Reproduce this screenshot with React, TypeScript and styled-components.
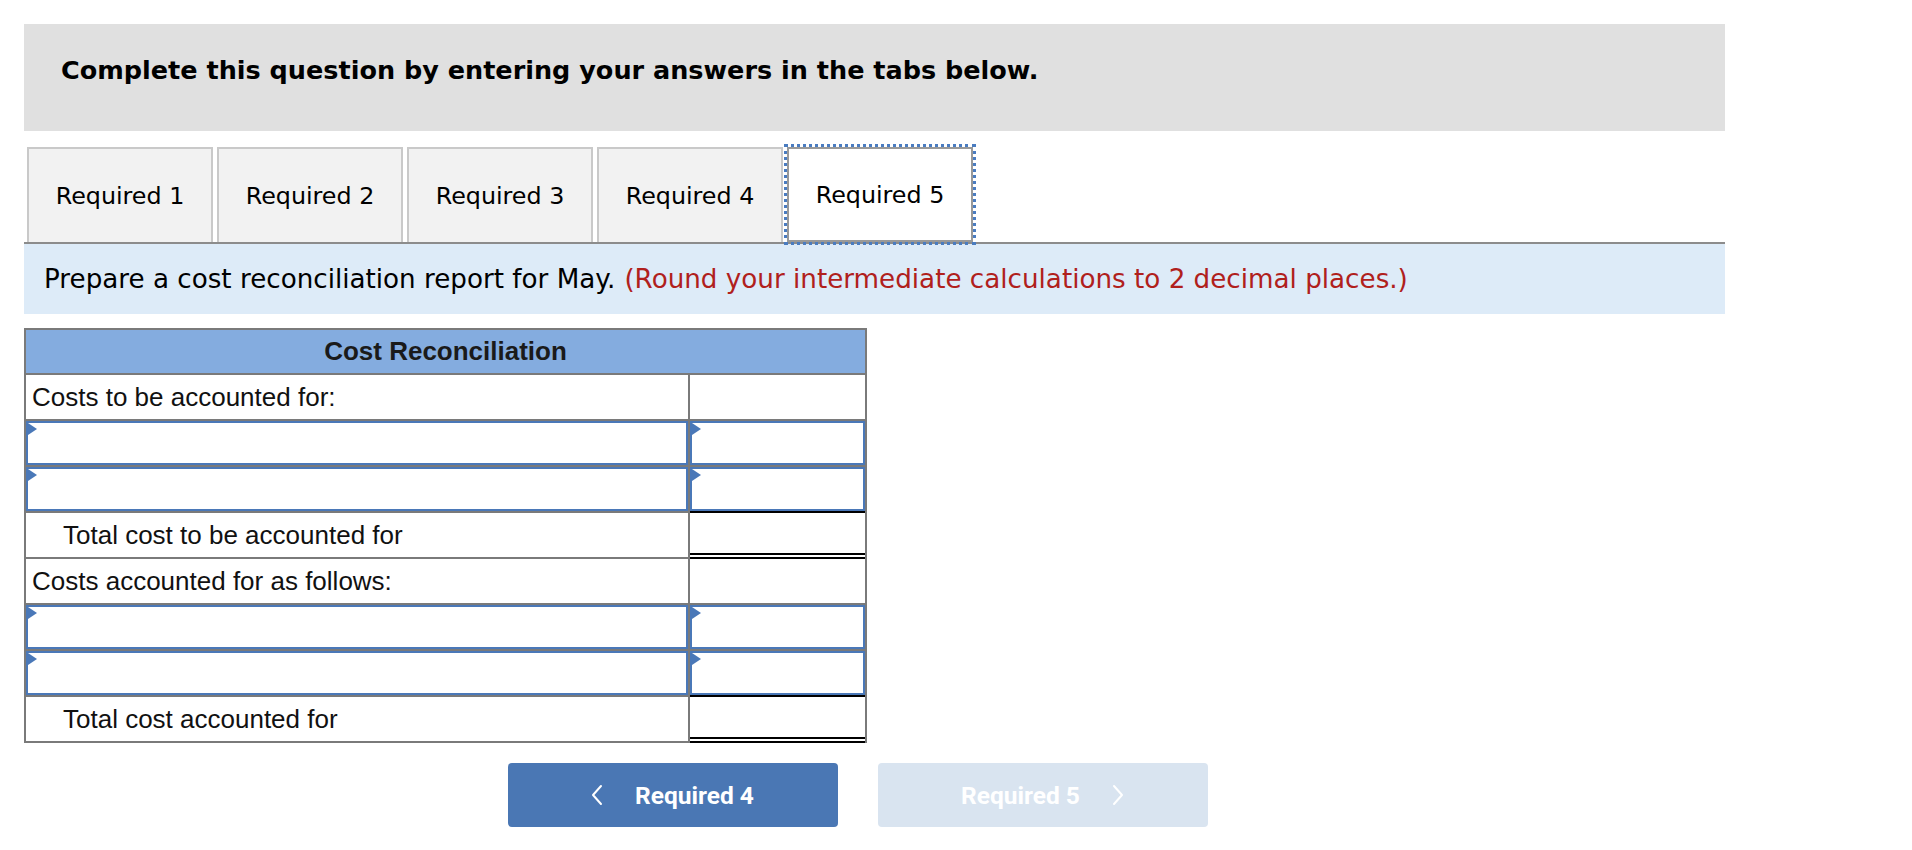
import React from 'react';
import styled, { createGlobalStyle } from 'styled-components';

const GlobalStyle = createGlobalStyle`
  body {
    margin: 0;
    background: #ffffff;
    font-family: "DejaVu Sans", Verdana, sans-serif;
  }
`;

const Page = styled.div`
  padding: 24px 0 0 24px;
  width: 1701px;
`;

const Banner = styled.div`
  background-color: #e0e0e0;
  height: 107px;
  padding: 22px 37px 0;
  box-sizing: border-box;
  font-family: "DejaVu Sans", Verdana, sans-serif;
  font-weight: bold;
  font-size: 25.5px;
  line-height: 48px;
  color: #000;
`;

const TabBar = styled.div`
  display: flex;
  gap: 4px;
  margin-top: 16px;
  padding-left: 3px;
  border-bottom: 2px solid #8c8c8c;
`;

const Tab = styled.button<{ $active?: boolean }>`
  width: 186px;
  height: 95px;
  box-sizing: border-box;
  margin: 0;
  padding: 0;
  font-family: "DejaVu Sans", Verdana, sans-serif;
  font-size: 23.8px;
  color: #000;
  cursor: pointer;
  background-color: ${(p) => (p.$active ? '#ffffff' : '#f2f2f2')};
  border: 2px solid ${(p) => (p.$active ? '#999999' : '#c9c9c9')};
  border-bottom: ${(p) => (p.$active ? '2px solid #999999' : 'none')};
  outline: ${(p) => (p.$active ? '3px dotted #4a7cc0' : 'none')};
  margin-bottom: ${(p) => (p.$active ? '-2px' : '0')};
  position: relative;
`;

const Instructions = styled.div`
  background-color: #ddebf8;
  height: 70px;
  padding-left: 20px;
  display: flex;
  align-items: center;
  font-family: "DejaVu Sans", Verdana, sans-serif;
  font-size: 26.2px;
  color: #000;
`;

const Hint = styled.span`
  color: #b0201c;
  margin-left: 9px;
`;

const Sheet = styled.div`
  margin-top: 14px;
  width: 843px;
  box-sizing: border-box;
  border: 2px solid #7a7a7a;
  border-bottom: none;
  font-family: "Liberation Sans", Arial, sans-serif;
  font-size: 26px;
  color: #111;
`;

const SheetTitle = styled.div`
  background-color: #84acdf;
  height: 45px;
  box-sizing: border-box;
  border-bottom: 2px solid #7a7a7a;
  display: flex;
  align-items: center;
  justify-content: center;
  font-weight: bold;
  color: #1a1a1a;
`;

const Row = styled.div`
  display: grid;
  grid-template-columns: 664px 1fr;
`;

const LabelCell = styled.div<{ $indent?: boolean }>`
  height: 46px;
  box-sizing: border-box;
  border-right: 2px solid #7a7a7a;
  border-bottom: 2px solid #7a7a7a;
  display: flex;
  align-items: center;
  padding-left: ${(p) => (p.$indent ? '37px' : '6px')};
`;

type Edge = 'gray' | 'black' | 'double';

const ValueCell = styled.div<{ $edge?: Edge; $left?: boolean }>`
  height: 46px;
  box-sizing: border-box;
  position: relative;
  border-right: ${(p) => (p.$left ? '2px solid #7a7a7a' : 'none')};
  border-bottom: ${(p) =>
    p.$edge === 'double'
      ? '6px double #000'
      : p.$edge === 'black'
      ? '2px solid #000'
      : '2px solid #7a7a7a'};

  &::before {
    content: '';
    position: absolute;
    top: 2px;
    left: 2px;
    width: 0;
    height: 0;
    border-top: 6px solid transparent;
    border-bottom: 6px solid transparent;
    border-left: 9px solid #4a78b8;
    pointer-events: none;
  }
`;

const PlainCell = styled.div<{ $edge?: Edge }>`
  height: 46px;
  box-sizing: border-box;
  border-bottom: ${(p) =>
    p.$edge === 'double' ? '6px double #000' : '2px solid #7a7a7a'};
`;

const Field = styled.input`
  display: block;
  width: 100%;
  height: 100%;
  box-sizing: border-box;
  margin: 0;
  border: 2px solid #4a78b8;
  outline: none;
  background: #fff;
  font-family: "Liberation Sans", Arial, sans-serif;
  font-size: 22px;
  padding: 0 10px;
`;

const Nav = styled.div`
  display: flex;
  justify-content: center;
  gap: 40px;
  margin-top: 20px;
  padding-right: 34px;
`;

const NavButton = styled.button<{ $disabled?: boolean }>`
  width: 330px;
  height: 64px;
  border: none;
  border-radius: 4px;
  background-color: ${(p) => (p.$disabled ? '#d9e4f0' : '#4a77b4')};
  color: #ffffff;
  font-family: Roboto, "Liberation Sans", Arial, sans-serif;
  font-weight: bold;
  font-size: 24.5px;
  display: flex;
  align-items: center;
  justify-content: center;
  gap: 32px;
  cursor: ${(p) => (p.$disabled ? 'default' : 'pointer')};
`;

const Chevron = ({ dir }: { dir: 'left' | 'right' }) => (
  <svg width="12" height="22" viewBox="0 0 12 22" fill="none">
    <polyline
      points={dir === 'left' ? '10,2 2,11 10,20' : '2,2 10,11 2,20'}
      stroke="#ffffff"
      strokeWidth="2"
      strokeLinecap="round"
      strokeLinejoin="round"
    />
  </svg>
);

const tabs = ['Required 1', 'Required 2', 'Required 3', 'Required 4', 'Required 5'];

const InputRow = ({ last }: { last?: boolean }) => (
  <Row>
    <ValueCell $left>
      <Field />
    </ValueCell>
    <ValueCell $edge={last ? 'black' : 'gray'}>
      <Field />
    </ValueCell>
  </Row>
);

const App: React.FC = () => {
  return (
    <>
      <GlobalStyle />
      <Page>
        <Banner>Complete this question by entering your answers in the tabs below.</Banner>

        <TabBar>
          {tabs.map((t, i) => (
            <Tab key={t} $active={i === 4}>
              {t}
            </Tab>
          ))}
        </TabBar>

        <Instructions>
          Prepare a cost reconciliation report for May.
          <Hint>(Round your intermediate calculations to 2 decimal places.)</Hint>
        </Instructions>

        <Sheet>
          <SheetTitle>Cost Reconciliation</SheetTitle>
          <Row>
            <LabelCell>Costs to be accounted for:</LabelCell>
            <PlainCell />
          </Row>
          <InputRow />
          <InputRow last />
          <Row>
            <LabelCell $indent>Total cost to be accounted for</LabelCell>
            <PlainCell $edge="double" />
          </Row>
          <Row>
            <LabelCell>Costs accounted for as follows:</LabelCell>
            <PlainCell />
          </Row>
          <InputRow />
          <InputRow last />
          <Row>
            <LabelCell $indent>Total cost accounted for</LabelCell>
            <PlainCell $edge="double" />
          </Row>
        </Sheet>

        <Nav>
          <NavButton>
            <Chevron dir="left" />
            Required 4
          </NavButton>
          <NavButton $disabled>
            Required 5
            <Chevron dir="right" />
          </NavButton>
        </Nav>
      </Page>
    </>
  );
};

export default App;
